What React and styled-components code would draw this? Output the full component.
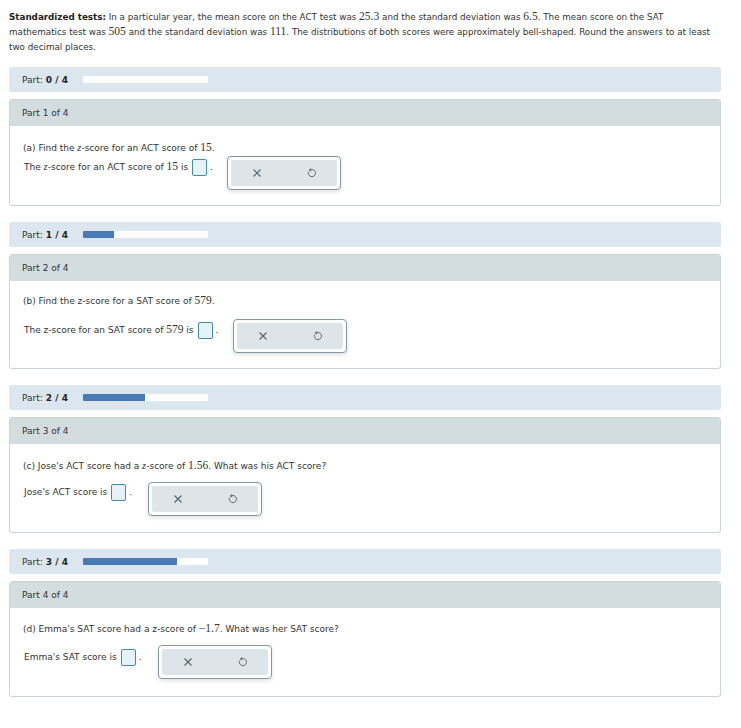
import React from "react";
import styled, { createGlobalStyle } from "styled-components";

const Global = createGlobalStyle`
  html, body { margin: 0; padding: 0; background: #fff; }
  body { font-family: "DejaVu Sans", Verdana, sans-serif; font-size: 9px; color: #333; }
`;

const Page = styled.div`
  padding: 10px 20px 20px 9px;
  width: 712px;
`;

const Intro = styled.p`
  margin: 0 0 12px 0;
  line-height: 15px;
  font-size: 8.75px;
  color: #333;
  b { color: #222; }
`;

const Num = styled.span`
  font-family: "Liberation Serif", "Times New Roman", serif;
  font-size: 11.5px;
  line-height: 1;
  color: #333;
`;

const Zi = styled.span`
  font-family: "Liberation Serif", serif;
  font-style: italic;
  font-size: 10.5px;
  line-height: 1;
`;

const PartBar = styled.div`
  height: 25px;
  background: #dbe6ef;
  border-radius: 3px;
  display: flex;
  align-items: center;
  padding-left: 13px;
  margin-bottom: 7px;
  color: #333;
  b { color: #222; margin-left: 3px; }
`;

const Track = styled.div`
  width: 125px;
  height: 7px;
  background: #fff;
  border-radius: 1px;
  margin-left: 15px;
  overflow: hidden;
`;

const Fill = styled.div`
  height: 100%;
  background: #4a7ab3;
`;

const Card = styled.div`
  border: 1px solid #ccd3d5;
  border-radius: 3px;
  margin-bottom: 16px;
  overflow: hidden;
`;

const CardHead = styled.div`
  height: 26px;
  background: #d3dcdf;
  display: flex;
  align-items: center;
  padding-left: 12px;
  color: #333;
`;

const CardBody = styled.div`
  padding: ${(p) => p.$pt}px 12px 0 12px;
  height: ${(p) => p.$h}px;
  box-sizing: border-box;
`;

const Question = styled.div`
  line-height: 14px;
  margin-left: 1px;
  height: 14px;
  display: flex;
  align-items: baseline;
  white-space: pre;
`;

const AnswerRow = styled.div`
  display: flex;
  align-items: flex-start;
  margin-top: ${(p) => p.$mt}px;
  padding-left: 2px;
`;

const AnswerText = styled.div`
  display: flex;
  align-items: center;
  height: 16px;
  margin-top: ${(p) => p.$tt}px;
  white-space: pre;
`;

const Blank = styled.span`
  display: inline-block;
  width: 13px;
  height: 15px;
  border: 1px solid #3d8ea3;
  background: #e5f3f8;
  border-radius: 2px;
  margin-left: 4px;
`;

const Dot = styled.span`
  margin-left: 3px;
`;

const Tools = styled.div`
  margin-left: ${(p) => p.$ml}px;
  width: 114px;
  height: 34px;
  box-sizing: border-box;
  border: 1px solid #7f9aa3;
  border-radius: 4px;
  padding: 3px;
  background: #fff;
  box-shadow: 0 2px 4px rgba(0, 0, 0, 0.12);
`;

const ToolsInner = styled.div`
  height: 100%;
  background: #dde5e8;
  border-radius: 2px;
  display: flex;
  align-items: center;
  justify-content: space-between;
  padding: 0 20px 0 21px;
`;

const Icon = styled.svg`
  width: ${(p) => p.$s}px;
  height: ${(p) => p.$s}px;
  color: #52636b;
  display: block;
`;

const XIcon = () => (
  <Icon $s={10} viewBox="0 0 10 10" fill="none" stroke="currentColor" strokeWidth="1.1">
    <path d="M1.5 1.5 L8.5 8.5 M8.5 1.5 L1.5 8.5" />
  </Icon>
);

const UndoIcon = () => (
  <Icon $s={11} viewBox="0 0 24 24" fill="none" stroke="currentColor" strokeWidth="2" strokeLinecap="round" strokeLinejoin="round">
    <path d="M8 4.5 A8 8 0 1 1 5 9" />
    <path d="M9.5 1.5 L7.5 4.8 L11 6.6" />
  </Icon>
);

const parts = [
  {
    done: 0,
    pt: 15,
    h: 79,
    q: (
      <>(a) Find the <Zi>z</Zi>-score for an ACT score of <Num>15</Num>.</>
    ),
    a: (
      <>The <Zi>z</Zi>-score for an ACT score of <Num>15</Num> is</>
    ),
    mt: 1,
    tt: 3,
    ml: 14,
  },
  {
    done: 1,
    pt: 13,
    h: 87,
    q: <>(b) Find the z-score for a SAT score of <Num>579</Num>.</>,
    a: <>The z-score for an SAT score of <Num>579</Num> is</>,
    mt: 11,
    tt: 3,
    ml: 15,
  },
  {
    done: 2,
    pt: 15,
    h: 88,
    q: (
      <>(c) Jose's ACT score had a <Zi>z</Zi>-score of <Num>1.56</Num>. What was his ACT score?</>
    ),
    a: <>Jose's ACT score is</>,
    mt: 9,
    tt: 2,
    ml: 16,
  },
  {
    done: 3,
    pt: 14,
    h: 88,
    q: (
      <>(d) Emma's SAT score had a z-score of <Num>−1.7</Num>. What was her SAT score?</>
    ),
    a: <>Emma's SAT score is</>,
    mt: 9,
    tt: 4,
    ml: 16,
  },
];

export default function App() {
  return (
    <Page>
      <Global />
      <Intro>
        <b>Standardized tests:</b> In a particular year, the mean score on the ACT test was <Num>25.3</Num> and the standard deviation was <Num>6.5</Num>. The mean score on the SAT mathematics test was <Num>505</Num> and the standard deviation was <Num>111</Num>. The distributions of both scores were approximately bell-shaped. Round the answers to at least two decimal places.
      </Intro>
      {parts.map((p, i) => (
        <React.Fragment key={i}>
          <PartBar>
            Part: <b>{p.done} / 4</b>
            <Track>
              <Fill style={{ width: `${(p.done / 4) * 100}%` }} />
            </Track>
          </PartBar>
          <Card>
            <CardHead>Part {i + 1} of 4</CardHead>
            <CardBody $pt={p.pt} $h={p.h}>
              <Question>{p.q}</Question>
              <AnswerRow $mt={p.mt}>
                <AnswerText $tt={p.tt}>
                  {p.a}
                  <Blank />
                  <Dot>.</Dot>
                </AnswerText>
                <Tools $ml={p.ml}>
                  <ToolsInner>
                    <XIcon />
                    <UndoIcon />
                  </ToolsInner>
                </Tools>
              </AnswerRow>
            </CardBody>
          </Card>
        </React.Fragment>
      ))}
    </Page>
  );
}
